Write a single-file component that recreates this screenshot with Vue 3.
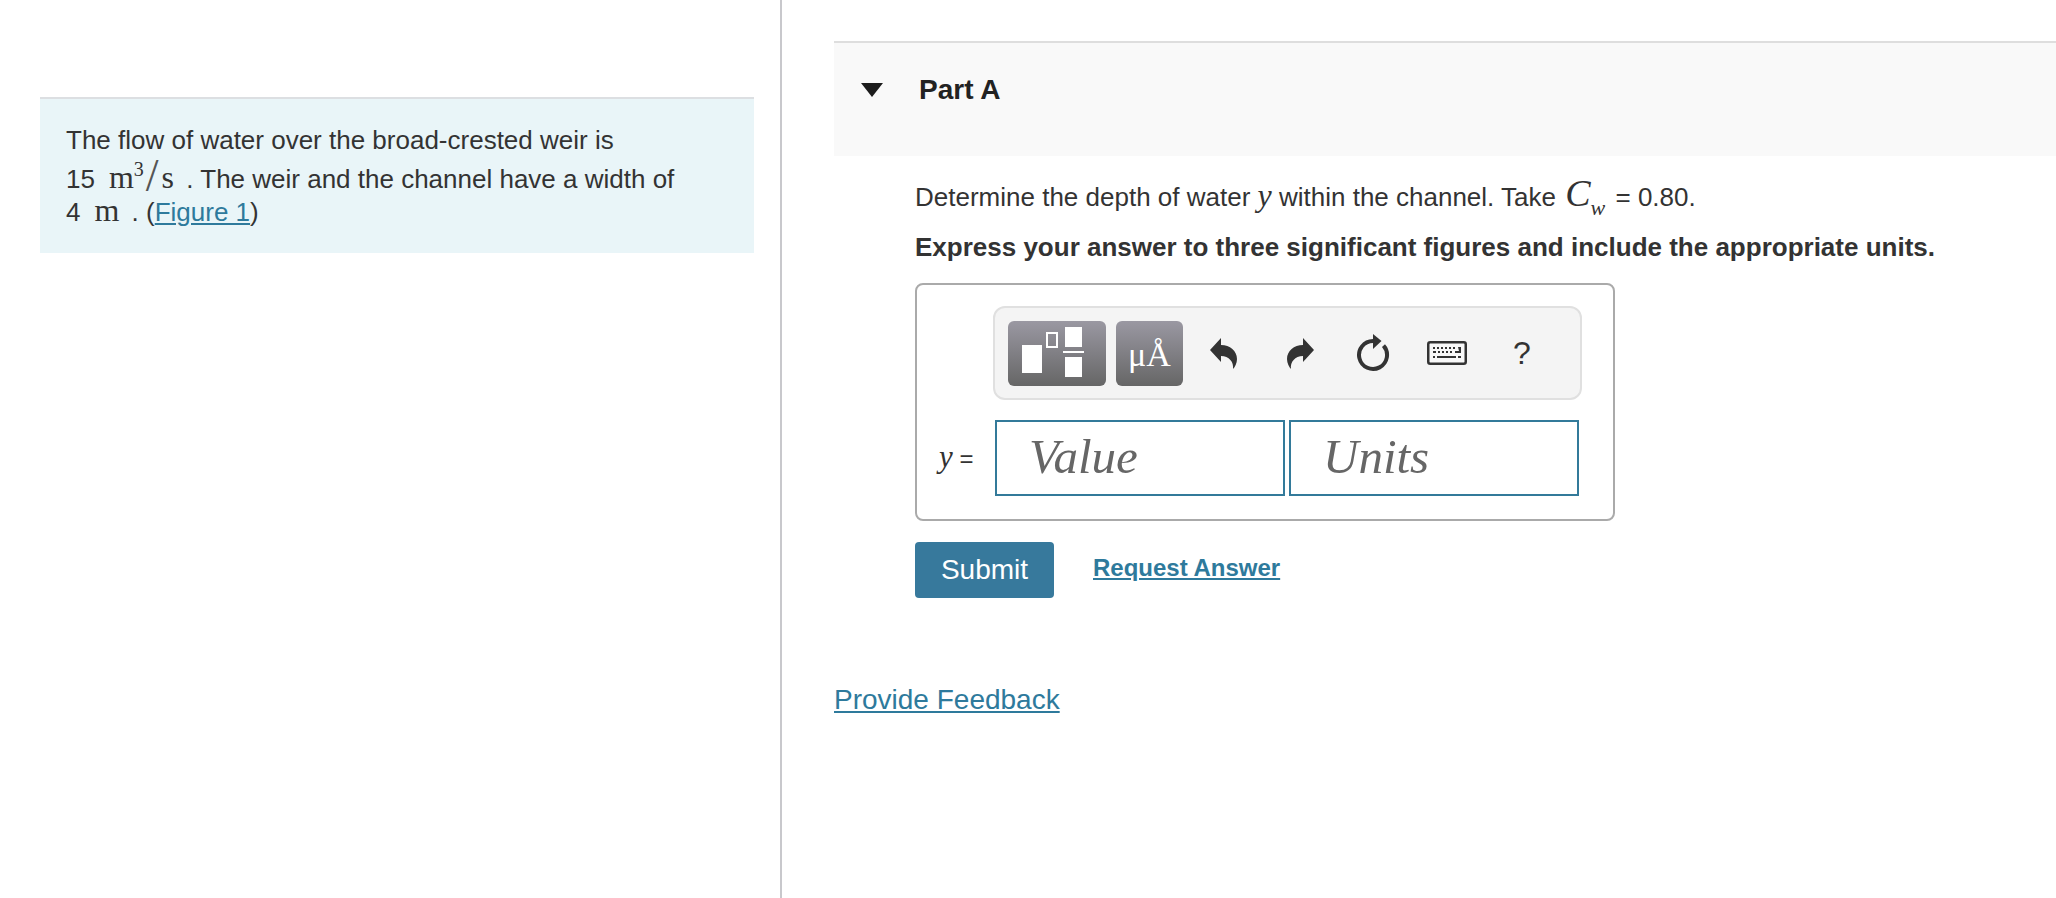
<script setup>
const tools = ['undo', 'redo', 'reset', 'keyboard', 'help']
</script>

<template>
  <div class="page">
    <aside class="left">
      <div class="intro">
        <p class="intro-line">The flow of water over the broad-crested weir is</p>
        <p class="intro-line tall">
          15<span class="math gap">m<sup>3</sup><span class="slash">/</span>s</span> . The weir and the channel have a width of
        </p>
        <p class="intro-line">4<span class="math gap">m</span> . (<a class="link" href="#">Figure 1</a>)</p>
      </div>
    </aside>

    <main class="right">
      <div class="part-head">
        <span class="caret"></span>
        <h2>Part A</h2>
      </div>

      <div class="part-body">
        <p class="question">
          Determine the depth of water <i class="math-i">y</i> within the channel. Take
          <i class="math-c">C<sub>w</sub></i> = 0.80.
        </p>
        <p class="instruction">Express your answer to three significant figures and include the appropriate units.</p>

        <div class="answer-box">
          <div class="toolbar">
            <button class="tpl tpl-wide" type="button">
              <svg width="98" height="65" viewBox="0 0 98 65">
                <rect x="14" y="24" width="20" height="28" fill="#fff" />
                <rect x="39" y="12" width="10" height="14" fill="none" stroke="#fff" stroke-width="2" />
                <rect x="57" y="6" width="17" height="20" fill="#fff" />
                <rect x="55" y="30" width="21" height="2" fill="#fff" />
                <rect x="57" y="36" width="17" height="20" fill="#fff" />
              </svg>
            </button>
            <button class="tpl tpl-unit" type="button">μÅ</button>
            <span v-for="tool in tools" :key="tool" class="tool" :class="'tool-' + tool">
              <svg v-if="tool === 'undo'" width="27" height="31" viewBox="0 0 27 31">
                <path d="M0 12 L11 0 V7 C20 7 27 13 27 21 C27 25 25 29 23 31 C24 24 19 18 11 18 V24 Z" fill="#333" />
              </svg>
              <svg v-else-if="tool === 'redo'" width="27" height="31" viewBox="0 0 27 31">
                <path d="M27 12 L16 0 V7 C7 7 0 13 0 21 C0 25 2 29 4 31 C3 24 8 18 16 18 V24 Z" fill="#333" />
              </svg>
              <svg v-else-if="tool === 'reset'" width="34" height="38" viewBox="0 0 34 38">
                <path d="M17 7 A14 14 0 1 0 27.500 11.700" fill="none" stroke="#333" stroke-width="4" />
                <path d="M17 0 L25.500 7 L17 15 Z" fill="#333" />
              </svg>
              <svg v-else-if="tool === 'keyboard'" width="40" height="24" viewBox="0 0 40 24">
                <rect x="1.250" y="1.250" width="37.500" height="21.500" rx="2" fill="#f8f8f8" stroke="#333" stroke-width="2.500" />
                <path d="M6 6h2v2H6zM10 6h2v2h-2zM14 6h2v2h-2zM18 6h2v2h-2zM22 6h2v2h-2zM26 6h2v2h-2zM31 6h3v6h-6v-2h4zM6 10h3v2H6zM11 10h2v2h-2zM15 10h2v2h-2zM19 10h2v2h-2zM23 10h2v2h-2zM6 15h2v2H6zM10 15h19v2H10zM31 15h3v2h-3z" fill="#333" />
              </svg>
              <span v-else class="help">?</span>
            </span>
          </div>

          <div class="input-row">
            <span class="var"><i>y</i> =</span>
            <input class="field" type="text" placeholder="Value" />
            <input class="field" type="text" placeholder="Units" />
          </div>
        </div>

        <div class="actions">
          <button class="submit" type="button">Submit</button>
          <a class="request" href="#">Request Answer</a>
        </div>
      </div>

      <a class="feedback" href="#">Provide Feedback</a>
    </main>
  </div>
</template>

<style>
html, body {
  margin: 0;
  background: #fff;
}
</style>

<style scoped>
.page {
  display: flex;
  height: 898px;
  overflow: hidden;
  font-family: "Liberation Sans", Arial, sans-serif;
  font-size: 26px;
  color: #333;
}

.left {
  box-sizing: border-box;
  width: 782px;
  flex: none;
  padding: 97px 26px 0 40px;
  border-right: 2px solid #c8c8cc;
}

.intro {
  box-sizing: border-box;
  height: 156px;
  padding: 24px 26px 0;
  background: #e9f5f8;
  border-top: 2px solid #dcdfe2;
}

.intro-line {
  margin: 0;
  line-height: 34px;
  white-space: nowrap;
}

.tall {
  height: 36px;
  line-height: 40px;
}

.math {
  font-family: "Liberation Serif", serif;
  font-size: 32px;
  margin-right: 5px;
}

.gap {
  margin-left: 14px;
}

.math sup {
  font-size: 20px;
  line-height: 0;
}

.slash {
  display: inline-block;
  margin: 0 3px 0 2px;
  font-size: 46px;
  line-height: 0;
  color: #555;
  vertical-align: -3px;
}

.link {
  color: #2e7a9c;
}

.right {
  flex: 1;
  min-width: 0;
  padding-left: 52px;
}

.part-head {
  box-sizing: border-box;
  display: flex;
  align-items: flex-start;
  height: 115px;
  margin-top: 41px;
  padding: 31px 0 0 27px;
  background: #f9f9f9;
  border-top: 2px solid #dedede;
}

.caret {
  width: 0;
  height: 0;
  margin-top: 9px;
  border-left: 11px solid transparent;
  border-right: 11px solid transparent;
  border-top: 14px solid #1c1c1c;
}

.part-head h2 {
  margin: 0 0 0 36px;
  font-size: 28px;
  line-height: 32px;
  font-weight: 700;
  color: #222;
}

.part-body {
  padding: 17px 0 0 81px;
}

.question {
  margin: 0;
  height: 40px;
  line-height: 40px;
  white-space: nowrap;
}

.math-i {
  font-family: "Liberation Serif", serif;
  font-size: 32px;
}

.math-c {
  font-family: "Liberation Serif", serif;
  font-size: 38px;
  margin-left: 2px;
  margin-right: 3px;
}

.math-c sub {
  font-size: 22px;
  line-height: 0;
}

.instruction {
  margin: 16px 0 0;
  font-weight: 700;
  line-height: 36px;
  white-space: nowrap;
}

.answer-box {
  box-sizing: border-box;
  width: 700px;
  height: 238px;
  margin-top: 18px;
  padding: 21px 0 0 76px;
  border: 2px solid #aaa;
  border-radius: 8px;
}

.toolbar {
  box-sizing: border-box;
  display: flex;
  align-items: center;
  width: 589px;
  height: 94px;
  padding-left: 13px;
  background: #f4f4f4;
  border: 2px solid #e0e0e0;
  border-radius: 12px;
}

.tpl {
  box-sizing: border-box;
  height: 65px;
  padding: 0;
  border: 0;
  border-radius: 6px;
  background: linear-gradient(#9a98a2, #666);
  color: #fff;
}

.tpl svg {
  display: block;
}

.tpl-wide {
  width: 98px;
  margin-right: 10px;
}

.tpl-unit {
  width: 67px;
  font-family: "Liberation Serif", serif;
  font-size: 34px;
  line-height: 68px;
  overflow: hidden;
  white-space: nowrap;
}

.tool {
  display: flex;
  align-items: center;
  justify-content: center;
}

.tool svg {
  display: block;
}

.tool-undo {
  margin-left: 27px;
}

.tool-redo {
  margin-left: 50px;
}

.tool-reset {
  margin-left: 42px;
}

.tool-keyboard {
  margin-left: 37px;
}

.tool-help {
  margin-left: 46px;
}

.help {
  font-size: 32px;
  line-height: 36px;
  color: #333;
}

.input-row {
  display: flex;
  align-items: center;
  margin: 20px 0 0 -62px;
}

.var {
  box-sizing: border-box;
  width: 64px;
  flex: none;
  padding: 0 0 2px 8px;
  font-size: 24px;
  white-space: nowrap;
}

.var i {
  font-family: "Liberation Serif", serif;
  font-size: 31px;
}

.field {
  box-sizing: border-box;
  width: 290px;
  height: 76px;
  margin-right: 4px;
  padding: 0 0 4px 32px;
  border: 2px solid #337a9a;
  border-radius: 0;
  outline: none;
  background: #fff;
  font-family: "Liberation Serif", serif;
  font-style: italic;
  font-size: 49px;
}

.field::placeholder {
  color: #666;
  opacity: 1;
}

.actions {
  display: flex;
  align-items: flex-start;
  margin-top: 21px;
}

.submit {
  width: 139px;
  height: 56px;
  padding: 0;
  border: 0;
  border-radius: 4px;
  background: #37799c;
  color: #fff;
  font-family: "Liberation Sans", Arial, sans-serif;
  font-size: 28px;
}

.request {
  margin: 12px 0 0 39px;
  font-size: 24px;
  line-height: 28px;
  font-weight: 700;
  color: #2e7a9c;
}

.feedback {
  display: block;
  width: max-content;
  margin-top: 85px;
  font-size: 28px;
  line-height: 34px;
  color: #2e7a9c;
}
</style>
